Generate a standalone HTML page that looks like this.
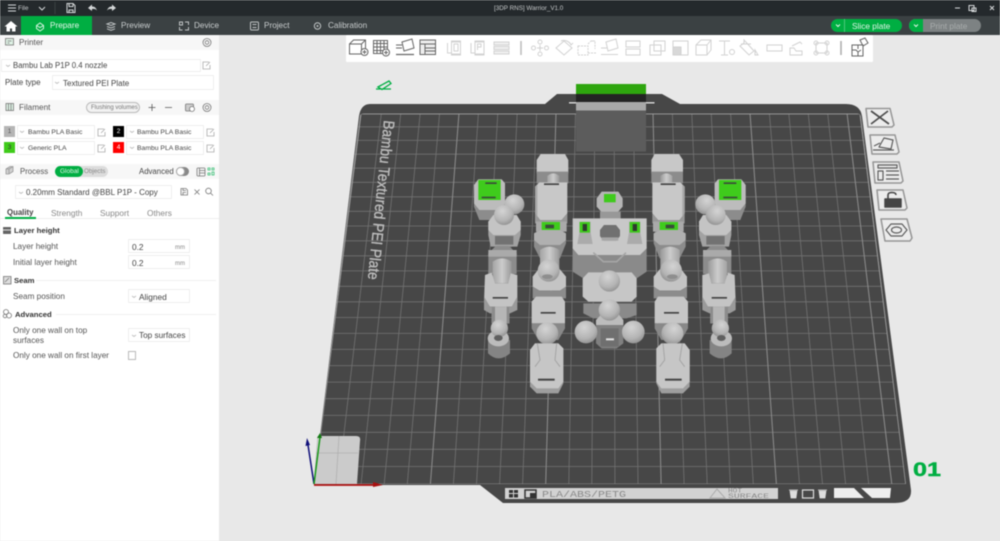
<!DOCTYPE html>
<html><head><meta charset="utf-8"><title>[3DP RNS] Warrior_V1.0</title>
<style>
html,body{margin:0;padding:0;background:#e8e8e8}
#w{position:relative;width:1000px;height:541px;overflow:hidden;background:#e8e8e8;font-family:"Liberation Sans",sans-serif;font-size:8px;color:#444;filter:blur(.4px)}
#w div,#w span.t{position:absolute;box-sizing:border-box;white-space:nowrap}
#w span.t{margin-top:1px}
.t{line-height:12px}
.box{background:#fff;border:1px solid #eee;border-radius:1px}
.h{font-weight:bold;color:#333;font-size:7.700px}
.l{color:#555;font-size:8.200px}
.tab{color:#c9cdce;font-size:8.200px}
svg.i{position:absolute;overflow:visible}
</style></head><body><div id="w">

<!-- top bars -->
<div style="left:0;top:0;width:1000px;height:16px;background:#24292c"></div>
<div style="left:0;top:16px;width:1000px;height:19px;background:#3b4143"></div>
<div style="left:21px;top:16px;width:71px;height:19px;background:#00ae42"></div>
<span class="t" style="left:18px;top:2px;font-size:6.500px;color:#c5c8c9">File</span>
<span class="t" style="left:494px;top:2px;font-size:6.300px;color:#c5c8c9">[3DP RNS] Warrior_V1.0</span>
<span class="t" style="left:50px;top:19px;color:#e6f7ec;font-size:8.200px">Prepare</span>
<span class="t tab" style="left:121px;top:19px">Preview</span>
<span class="t tab" style="left:194px;top:19px">Device</span>
<span class="t tab" style="left:264px;top:19px">Project</span>
<span class="t tab" style="left:328px;top:19px">Calibration</span>

<svg class="i" style="left:0;top:0" width="1000" height="35" fill="none" stroke="#d5d8d9" stroke-width="1">
 <path d="M8 5h8M8 8h8M8 11h8"/><path d="M39 7l3 3 3-3"/><path d="M55 2v12" stroke="#3b4143"/>
 <path d="M67 3.500h6l2 2v7h-8zM69 3.500v3h4v-3M69 13v-3h4v3"/>
 <path d="M88 8l4-3.500v2c3 0 4 1.500 5 4-1-1.500-3-2-5-1.500v2z" fill="#d5d8d9" stroke="none"/>
 <path d="M116 8l-4-3.500v2c-3 0-4 1.500-5 4 1-1.500 3-2 5-1.500v2z" fill="#d5d8d9" stroke="none"/>
 <path d="M955 8h5"/><path d="M969 5.500h5v5h-5zM972 8h4v3.500h-4z"/><path d="M990 6l4 4M994 6l-4 4"/>
 <path d="M11 21l-6.500 5.500h2v5h3.500v-3h2v3h3.500v-5h2z" fill="#fff" stroke="none"/>
 <path d="M36.500 25.500l3.500-2.500 3.500 2.500v3l-3.500 2.500-3.500-2.500zM36.500 25.500l3.500 2 3.500-2" stroke="#d5f3e0"/>
 <path d="M107 24l4-1.500 4 1.500-4 1.500zM107 26.500l4 1.500 4-1.500M107 28.800l4 1.500 4-1.500" stroke="#c0c4c5"/>
 <path d="M179.500 22h3v3h-3zM185 30h3.500v-3M185 22h3.500v3M179.500 27v3h3" stroke="#c0c4c5"/>
 <rect x="250.500" y="22" width="8" height="8" rx="1" stroke="#c0c4c5"/><path d="M252.500 24.500h4M252.500 27.500h4" stroke="#c0c4c5"/>
 <circle cx="317.500" cy="26" r="3.200" stroke="#c0c4c5"/><circle cx="317.500" cy="26" r="1" fill="#c0c4c5" stroke="none"/>
</svg>

<!-- Slice / print -->
<div style="left:831px;top:19px;width:71px;height:13px;border-radius:7px;background:#00ae42"></div>
<div style="left:844px;top:19px;width:1px;height:13px;background:#4cc87a"></div>
<span class="t" style="left:852px;top:19px;color:#dff5e7;font-size:8.300px">Slice plate</span>
<div style="left:909px;top:19px;width:72px;height:13px;border-radius:7px;background:#7d8283"></div>
<div style="left:909px;top:19px;width:14px;height:13px;border-radius:7px 0 0 7px;background:#00ae42"></div>
<span class="t" style="left:930px;top:19px;color:#a9adad;font-size:8.300px">Print plate</span>
<svg class="i" style="left:0;top:0" width="1000" height="35" fill="none" stroke="#dff5e7"><path d="M836 24.500l2 2 2-2M914 24.500l2 2 2-2"/></svg>

<!-- left panel -->
<div style="left:0;top:35px;width:219px;height:506px;background:#fff"></div>
<div style="left:0;top:35px;width:219px;height:15px;background:#f7f7f7"></div>
<div style="left:0;top:100px;width:219px;height:15px;background:#f7f7f7"></div>
<div style="left:0;top:164px;width:219px;height:15px;background:#f7f7f7"></div>

<span class="t l" style="left:19px;top:36px">Printer</span>
<div class="box" style="left:1px;top:59px;width:200px;height:13px"></div>
<span class="t" style="left:13px;top:59px;font-size:7.800px">Bambu Lab P1P 0.4 nozzle</span>
<span class="t" style="left:5px;top:76px">Plate type</span>
<div class="box" style="left:52px;top:75px;width:162px;height:15px"></div>
<span class="t" style="left:63px;top:77px">Textured PEI Plate</span>
<span class="t l" style="left:19px;top:101px">Filament</span>
<div style="left:86px;top:102px;width:54px;height:11px;border:1px solid #bbb;border-radius:6px;background:#f2f2f2"></div>
<span class="t" style="left:91px;top:101px;font-size:6px;color:#777">Flushing volumes</span>

<!-- filament rows -->
<div style="left:4px;top:126px;width:11px;height:11px;background:#b5b5b5;color:#555;font-size:6.500px;line-height:11px;text-align:center">1</div>
<div class="box" style="left:17px;top:125px;width:78px;height:14px"></div>
<span class="t" style="left:28px;top:126px;font-size:6.800px">Bambu PLA Basic</span>
<div style="left:113px;top:126px;width:11px;height:11px;background:#000;color:#fff;font-size:6.500px;line-height:11px;text-align:center">2</div>
<div class="box" style="left:126px;top:125px;width:78px;height:14px"></div>
<span class="t" style="left:137px;top:126px;font-size:6.800px">Bambu PLA Basic</span>
<div style="left:4px;top:142px;width:11px;height:11px;background:#3fcb1a;color:#333;font-size:6.500px;line-height:11px;text-align:center">3</div>
<div class="box" style="left:17px;top:141px;width:78px;height:14px"></div>
<span class="t" style="left:28px;top:142px;font-size:6.800px">Generic PLA</span>
<div style="left:113px;top:142px;width:11px;height:11px;background:#f00;color:#fff;font-size:6.500px;line-height:11px;text-align:center">4</div>
<div class="box" style="left:126px;top:141px;width:78px;height:14px"></div>
<span class="t" style="left:137px;top:142px;font-size:6.800px">Bambu PLA Basic</span>

<!-- process -->
<span class="t" style="left:20px;top:165px;font-size:7.800px;color:#555">Process</span>
<div style="left:55px;top:166px;width:53px;height:11px;border-radius:6px;background:#dcdcdc"></div>
<div style="left:55px;top:166px;width:28px;height:11px;border-radius:6px;background:#00ae42"></div>
<span class="t" style="left:60px;top:165px;font-size:6.500px;color:#dff5e7">Global</span>
<span class="t" style="left:84px;top:165px;font-size:6.300px;color:#888">Objects</span>
<span class="t" style="left:139px;top:165px;font-size:7.800px">Advanced</span>
<div style="left:176px;top:167px;width:13px;height:9px;border-radius:5px;background:#888"></div>
<div style="left:176px;top:167px;width:9px;height:9px;border-radius:5px;background:#fff;border:1px solid #aaa"></div>
<div class="box" style="left:15px;top:185px;width:157px;height:14px"></div>
<span class="t" style="left:26px;top:186px;font-size:8px">0.20mm Standard @BBL P1P - Copy</span>

<!-- tabs -->
<div style="left:0;top:218px;width:219px;height:1px;background:#eee"></div>
<div style="left:5px;top:217px;width:31px;height:1.500px;background:#00ae42"></div>
<span class="t" style="left:7px;top:206px;font-weight:bold;color:#444;font-size:7.800px">Quality</span>
<span class="t" style="left:51px;top:206px;color:#888;font-size:8.300px">Strength</span>
<span class="t" style="left:100px;top:206px;color:#888;font-size:8.300px">Support</span>
<span class="t" style="left:147px;top:206px;color:#888;font-size:8.300px">Others</span>

<span class="t h" style="left:14px;top:224px">Layer height</span>
<span class="t l" style="left:13px;top:240px">Layer height</span>
<div class="box" style="left:128px;top:239px;width:62px;height:14px"></div>
<span class="t" style="left:132px;top:240px;font-size:8.300px">0.2</span><span class="t" style="left:175px;top:241px;font-size:6px;color:#888">mm</span>
<span class="t l" style="left:13px;top:256px">Initial layer height</span>
<div class="box" style="left:128px;top:255px;width:62px;height:14px"></div>
<span class="t" style="left:132px;top:256px;font-size:8.300px">0.2</span><span class="t" style="left:175px;top:257px;font-size:6px;color:#888">mm</span>

<span class="t h" style="left:14px;top:274px">Seam</span>
<div style="left:36px;top:280px;width:180px;height:1px;background:#f0f0f0"></div>
<span class="t l" style="left:13px;top:290px">Seam position</span>
<div class="box" style="left:128px;top:289px;width:62px;height:14px"></div>
<span class="t" style="left:139px;top:290px;font-size:8.300px">Aligned</span>

<span class="t h" style="left:15px;top:308px">Advanced</span>
<div style="left:56px;top:314px;width:160px;height:1px;background:#f0f0f0"></div>
<span class="t l" style="left:13px;top:325px;line-height:10px">Only one wall on top<br>surfaces</span>
<div class="box" style="left:128px;top:328px;width:62px;height:14px"></div>
<span class="t" style="left:139px;top:329px;font-size:8.200px">Top surfaces</span>
<span class="t l" style="left:13px;top:349px">Only one wall on first layer</span>
<div style="left:128px;top:351px;width:8px;height:9px;border:1px solid #bbb;background:#fff"></div>

<!-- panel icons -->
<svg class="i" style="left:0;top:0" width="219" height="370" fill="none" stroke="#777" stroke-width=".8">
 <rect x="5.500" y="38.500" width="8" height="6.500" fill="#dff3e6"/><path d="M7.500 41h4M7.500 43h2"/>
 <circle cx="207" cy="42.500" r="4" /><circle cx="207" cy="42.500" r="1.800"/>
 <path d="M209 62h-6v7h7v-4M206 66l4-4" stroke="#aaa"/>
 <rect x="6" y="103.500" width="7.500" height="7" fill="#dff3e6"/><path d="M8.500 103.500v7M11 103.500v7"/>
 <path d="M152 104v7M148.500 107.500h7M165 107.500h7" stroke="#555"/>
 <rect x="185.500" y="104" width="8" height="7" rx="1" fill="#ccc"/><circle cx="192" cy="109" r="2.500" fill="#fff"/>
 <circle cx="207" cy="107.500" r="4"/><circle cx="207" cy="107.500" r="1.800"/>
 <path d="M104 129h-6v7h7v-4M101 133l4-4M104 145h-6v7h7v-4M101 149l4-4M213 129h-6v7h7v-4M210 133l4-4M213 145h-6v7h7v-4M210 149l4-4" stroke="#aaa"/>
 <path d="M6 169l4-2.500h3v5l-4 2.500h-3zM6 169h3v5M9 169l4-2.500" fill="#d0d0d0" stroke="#999"/>
 <rect x="197" y="168" width="8" height="8" rx="1"/><path d="M199.500 168v8M199.500 170.500h5.500M199.500 173h5.500"/>
 <path d="M208 168h2v2h-2zM212 168h2v2h-2zM208 173h2v2h-2zM212 172h2v3h-2z" stroke="#3bbf75"/>
 <path d="M181 188.500h5l1.500 1.500v5h-6.500zM183 188.500v2h3M183 195v-2.500h3" />
 <path d="M194.500 189.500l5 5M199.500 189.500l-5 5"/>
 <circle cx="208.500" cy="191" r="2.800"/><path d="M210.500 193l2.500 2.500"/>
 <rect x="3.500" y="227.500" width="7" height="6" fill="#666" stroke="#555"/><path d="M3 230h8" stroke="#fff"/>
 <rect x="3.500" y="276.500" width="7.500" height="7.500" fill="#ddd"/><path d="M5 282l4-4"/>
 <circle cx="6" cy="312" r="2.500"/><circle cx="9" cy="315.500" r="2.500"/><circle cx="5" cy="316" r="1.800"/>
</svg>
<svg class="i" style="left:0;top:0" width="219" height="345" fill="none" stroke="#bbb" stroke-width=".8">
 <path d="M6 65l2 1.500 2-1.500M55 82l2 1.500 2-1.500M20 131l2 1.500 2-1.500M20 147l2 1.500 2-1.500M130 131l2 1.500 2-1.500M130 147l2 1.500 2-1.500M19 192l2 1.500 2-1.500M132 296l2 1.500 2-1.500M132 335l2 1.500 2-1.500"/>
</svg>

<!-- toolbar -->
<div style="left:346px;top:35px;width:527px;height:27px;background:#fff;border-radius:1px"></div>
<svg class="i" style="left:0;top:0" width="1000" height="100" fill="none" stroke="#666" stroke-width="1">
 <path d="M349.500 44h12v10h-12zM349.500 44l4-4h12v10l-4 4M361.500 44l4-4"/><circle cx="364.500" cy="52" r="3.500" fill="#fff"/><path d="M362.500 52h4M364.500 50v4"/>
 <path d="M373.500 40.500h14v13h-14zM373.500 43.500h14M373.500 47h14M373.500 50.500h14M377 40.500v13M380.500 40.500v13M384 40.500v13"/><circle cx="386" cy="52.500" r="3.500" fill="#fff"/><path d="M384 52.500h4M386 50.500v4"/>
 <path d="M402 42l10-3 2 9-10 3zM396 45h6M396 48h6" /><path d="M396 54.500h18" stroke-width="1.300"/>
 <rect x="420" y="40" width="15.500" height="14.500" fill="#eee"/><path d="M420 44h15.500M425 44v10.500M425 48h10.500M425 51h10.500"/>
 <g stroke="#d2d2d2">
 <path d="M447.500 43v10h4v2h9v-13h-9"/><path d="M451.500 41h9v13h-9z"/><rect x="454" y="44" width="4" height="7"/>
 <path d="M471 43v10h4v2h9v-13h-9"/><path d="M475 41h9v13h-9z"/><path d="M477.500 50v-6h3.500v3h-3.500"/>
 <path d="M494 42h15v3h-15zM494 46.500h15v3h-15zM494 51h15v3h-15z" fill="#f0f0f0"/>
 <path d="M521 41v14" stroke="#bbb" stroke-width="1.500"/>
 <circle cx="540" cy="42" r="2"/><circle cx="540" cy="54" r="2"/><circle cx="533.500" cy="48" r="2"/><circle cx="546.500" cy="48" r="2"/><path d="M537 48h6M540 45v6"/>
 <path d="M556 48l8-7 8 7-8 7zM561 41c4-2 9 1 10 4l2-2"/>
 <path d="M578 46h10v9h-10zM588 44l3-3h4v8M591 41h4M588 53h8" stroke-dasharray="2 1"/>
 <path d="M606 42l10-3 2 9-10 3zM601 48h6M601 54.500h17"/>
 <path d="M626 41h14v6h-14zM626 49h14v6h-14z"/>
 <path d="M650 45h11v10h-11zM654 41h11v10h-11z"/>
 <path d="M673 41h15v14h-15z"/><path d="M673 47h8v8h-8z" fill="#d8d8d8"/>
 <path d="M696 45h11v10h-11zM696 45l5-5h10v10l-4 5M707 45l4-5"/>
 <path d="M719 41h11M724.500 41v14M721 55h7"/><circle cx="732" cy="52" r="2.500"/>
 <path d="M744 40l10 11-5 4-9-9 4-3zM741 44h10M755 50l3 5h-3z"/>
 <rect x="767" y="45" width="15" height="6"/>
 <path d="M790 55v-7h4l2 3h6v4zM792 46l8-4 2 2"/>
 <path d="M816 43h11v10h-11z"/><circle cx="816" cy="43" r="2"/><circle cx="827" cy="43" r="2"/><circle cx="816" cy="53" r="2"/><circle cx="827" cy="53" r="2"/>
 </g>
 <path d="M841 41v14" stroke="#aaa" stroke-width="1.500"/>
 <path d="M852 45h11v11h-11zM852 50h4l2 2 3-2M858 45v4M858 52v4M860 40l5-2 3 5-5 3z" fill="#fff"/>
 <path d="M378 87l11-6 2 2.500-9 6zM376 89h15" stroke="#00ae42" stroke-width="1.300"/>
</svg>

<!-- build plate -->
<svg class="i" style="left:0;top:0" width="1000" height="541">
 <defs>
  <clipPath id="g"><path d="M364 113.500h493q3.500 0 4 3L906 484H314.500L359 118q.7-4.500 5-4.500z"/></clipPath>
  <radialGradient id="b" cx=".42" cy=".3" r=".75"><stop offset="0" stop-color="#d4d4d4"/><stop offset=".65" stop-color="#b4b4b4"/><stop offset="1" stop-color="#8e8e8e"/></radialGradient>
  <linearGradient id="c" x1="0" x2="1"><stop offset="0" stop-color="#a4a4a4"/><stop offset=".5" stop-color="#cccccc"/><stop offset="1" stop-color="#989898"/></linearGradient>
 </defs>
 <path d="M370 104H545L557 94H662L680 104H846Q860 104 862 116L911 490Q912 503 895 503H503L480 485H314L359 116Q361 104 370 104Z" fill="#474747"/>
 <g clip-path="url(#g)" fill="none" stroke="#737373" stroke-width=".8">
  <path d="M300 466.500H920M300 449.300H920M300 432.300H920M300 415.400H920M300 398.700H920M300 382.100H920M300 365.600H920M300 349.400H920M300 333.400H920M300 317.500H920M300 301.800H920M300 286.300H920M300 270.900H920M300 255.800H920M300 240.800H920M300 226H920M300 211.300H920M300 196.800H920M300 182.300H920M300 168.200H920M300 154.200H920M300 140.400H920M300 126.800H920"/>
  <path d="M381.400 113L338.100 484M400.800 113L361.100 484M420.200 113L384.200 484M439.600 113L407.300 484M478.400 113L453.400 484M497.800 113L476.500 484M517.200 113L499.600 484M536.600 113L522.600 484M575.400 113L568.800 484M594.800 113L591.800 484M614.200 113L614.900 484M633.600 113L638 484M672.400 113L684.100 484M691.800 113L707.200 484M711.200 113L730.300 484M730.600 113L753.300 484M769.400 113L799.500 484M788.800 113L822.500 484M808.200 113L845.600 484M827.600 113L868.700 484"/>
  <path d="M459 113L430.400 484M556 113L545.700 484M653 113L661.100 484M750 113L776.400 484M847 113L891.800 484" stroke="#8e8e8e" stroke-width="1"/>
  <path d="M300 113.800H920M300 484.200H920M361 113L314 485M860 113L906 485" stroke="#a0a0a0" stroke-width="1.200"/>
 </g>
 <path d="M319 436H356Q361 436 360 441L357 484H314.500Z" fill="#cbcbcb" stroke="none"/>
 <path d="M316 453H358M318 436L314 484M339 436L336 484" stroke="#b0b0b0" stroke-width=".8" fill="none"/>
 <path d="M569 102.800H654.500" stroke="#fff" stroke-width="1.200"/>
 <!-- purge tower -->
 <rect x="576" y="84" width="70" height="10" fill="#2ea50e"/>
 <rect x="576" y="94" width="70" height="8" fill="#232323"/>
 <rect x="576" y="102" width="70" height="8.500" fill="#a8a8a8"/>
 <rect x="576" y="110.500" width="70" height="41" fill="#5c5c5c"/>
 <text transform="translate(384,120) rotate(95.8)" font-family="Liberation Sans,sans-serif" font-size="15.500" fill="#bcbcbc" stroke="#bcbcbc" stroke-width=".35" textLength="160" lengthAdjust="spacingAndGlyphs">Bambu Textured PEI Plate</text>

 <!-- axes -->
 <path d="M314 484L308 445" stroke="#10107a" stroke-width="1.500"/><path d="M305.500 446L307 438L310 445Z" fill="#10107a"/>
 <path d="M314 484L320 437" stroke="#1a9a1a" stroke-width="1.500"/><path d="M317 438L320 433L322 438Z" fill="#127a12"/>
 <path d="M314 485H376" stroke="#b01010" stroke-width="1.800"/><path d="M373 482L383 485L373 487Z" fill="#a81010"/>

 <!-- bottom labels -->
 <rect x="505" y="488" width="273" height="11" fill="#d2d2d2"/>
 <path d="M509 490h4v3h-4zM514 490h4v3h-4zM509 494h4v3.500h-4zM514 494h4v3.500h-4z" fill="#333"/>
 <path d="M525 490h11v8h-11z" fill="none" stroke="#333" stroke-width="1.500"/><path d="M530 493h6v5h-6z" fill="#333"/>
 <text x="542" y="497" font-family="Liberation Mono,monospace" font-size="9" fill="#8a8a8a" textLength="84" lengthAdjust="spacingAndGlyphs">PLA/ABS/PETG</text>
 <path d="M710 498L717 489L725 498Z" fill="none" stroke="#aaa"/>
 <text x="728" y="492.500" font-family="Liberation Mono,monospace" font-size="6" fill="#8a8a8a" textLength="14" lengthAdjust="spacingAndGlyphs">HOT</text>
 <text x="728" y="498" font-family="Liberation Mono,monospace" font-size="6" fill="#8a8a8a" textLength="41" lengthAdjust="spacingAndGlyphs">SURFACE</text>
 <path d="M790 491h7l-1 7h-5zM789 490h9" fill="#dedede" stroke="#dedede" stroke-width=".7"/>
 <rect x="802.500" y="490" width="11" height="8" fill="none" stroke="#dedede" stroke-width="1.200"/>
 <path d="M819 491h7l-1 7h-5zM818 490h9" fill="#dedede" stroke="#dedede" stroke-width=".7"/>
 <path d="M834 488H854L864 498H834ZM861 488H891L890 498H872Z" fill="#eee"/>
 <text x="913" y="476" font-family="Liberation Sans,sans-serif" font-weight="bold" font-size="19" fill="#00ae42" textLength="28" lengthAdjust="spacingAndGlyphs" stroke="#00ae42" stroke-width=".4">01</text>

 <!-- right side icons -->
 <g fill="none" stroke="#959595" stroke-width="1.500" stroke-linejoin="round">
  <path d="M866 108.500H890L894 125L892 127H868Z" fill="#ececec"/>
  <path d="M871 111L889 124M888 111L871 124" stroke="#4d4d4d" stroke-width="1.700"/>
  <path d="M870 135H895L899 152L897 154H872Z" fill="#ececec"/>
  <path d="M879 147L884 138L893 140L891 149ZM873 150H894M874 146L880 143" stroke="#5d5d5d" stroke-width="1.200"/>
  <path d="M873 162H899L903 181L901 183H875Z" fill="#ececec"/>
  <path d="M878 165H897V168H878ZM878 171H883V180H878ZM886 171H899M886 175H899M886 179H899" stroke="#5d5d5d" stroke-width="1.200"/>
  <path d="M877 190H903L907 208L905 210H879Z" fill="#ececec"/>
  <path d="M885 199H901V207H885Z" fill="#444" stroke="#444"/><path d="M888 199V195Q888 192.500 892 192.500Q896 192.500 896 195" stroke="#444" stroke-width="1.600"/>
  <path d="M881 219H907L912 238L910 241H885Z" fill="#ececec"/>
  <path d="M886 230L891 224H902L907 230L902 236H891Z" stroke="#5d5d5d" stroke-width="1.200"/><ellipse cx="896.500" cy="230" rx="5" ry="3" stroke="#5d5d5d" stroke-width="1.200"/>
 </g>

 <!-- robot -->
 <g transform="translate(460,150) scale(.33333)">
  <g id="half">
   <!-- outer arm -->
   <path d="M42 170V105L55 88H125L135 100V170L120 210H58Z" fill="#8c8c8c"/>
   <path d="M42 160V105L55 88H125L135 100V160L120 180H58Z" fill="#bcbcbc"/>
   <rect x="55" y="90" width="67" height="60" fill="#3fcb1c"/>
   <rect x="76" y="97" width="34" height="5" fill="#3a4a3a"/><rect x="65" y="140" width="42" height="5" fill="#3a4a3a"/>
   <circle cx="163" cy="163" r="30" fill="url(#b)"/>
   <path d="M85 215L100 195H170L182 215V255L172 290H92L85 255Z" fill="#a2a2a2"/>
   <path d="M85 215L100 195H170L182 215V240L165 255H100L85 240Z" fill="#c4c4c4"/>
   <rect x="105" y="258" width="55" height="26" fill="#727272"/>
   <circle cx="132" cy="195" r="30" fill="url(#b)"/>
   <path d="M85 310L107 288H147L170 310V372H85Z" fill="#8c8c8c"/>
   <path d="M85 300H170V320H85Z" fill="#aaaaaa"/>
   <path d="M98 335Q125 315 155 335V400H98Z" fill="url(#c)"/>
   <path d="M75 375L95 368L105 400H145L152 370L172 375V455L155 470H90L72 455Z" fill="#c4c4c4"/>
   <path d="M72 440L90 470H155L172 440V480L150 490H90L72 480Z" fill="#9a9a9a"/>
   <rect x="98" y="441" width="46" height="5" fill="#444"/>
   <path d="M95 470H148V520H95Z" fill="#b6b6b6"/><path d="M95 470H105V520H95ZM140 470H148V520H140Z" fill="#8c8c8c"/>
   <path d="M84 570V610Q115 640 150 610V570Z" fill="#848484"/>
   <ellipse cx="115" cy="565" rx="32" ry="24" fill="#bcbcbc"/>
   <circle cx="118" cy="535" r="26" fill="url(#b)"/>
   <ellipse cx="115" cy="564" rx="13" ry="9" fill="#5f5f5f"/>
   <!-- inner leg -->
   <path d="M230 30L242 12H315L325 30V70H230Z" fill="#c8c8c8"/>
   <path d="M230 65H325V100H230Z" fill="#8c8c8c"/>
   <path d="M262 78Q280 62 298 78V100H262Z" fill="url(#c)"/>
   <path d="M225 110L238 97H322V190L305 210H240L225 190Z" fill="#c8c8c8"/>
   <path d="M225 190V110L232 103V205Z" fill="#a6a6a6"/>
   <path d="M225 190L240 210H305L322 190V220H225Z" fill="#989898"/>
   <rect x="252" y="100" width="45" height="5" fill="#444"/>
   <path d="M228 215H320V245H228Z" fill="#aaaaaa"/>
   <rect x="245" y="216" width="55" height="26" fill="#3fcb1c"/><rect x="256" y="224" width="26" height="11" fill="#3a4a3a"/>
   <path d="M222 250L240 240H300L318 250V280L300 325H240L222 290Z" fill="#8c8c8c"/>
   <path d="M222 250L240 240H300L318 250V270L300 285H240L222 270Z" fill="#b0b0b0"/>
   <path d="M240 300Q268 280 298 300V380H240Z" fill="url(#c)"/>
   <path d="M218 380L235 358H300L318 380V410L300 422H238L218 410Z" fill="#c4c4c4"/>
   <circle cx="266" cy="362" r="33" fill="url(#b)"/>
   <ellipse cx="262" cy="380" rx="16" ry="7" fill="#8e8e8e"/>
   <path d="M218 410L238 422H300L318 410V445H218Z" fill="#8c8c8c"/>
   <path d="M215 455L228 440H305L315 455V520H215Z" fill="#c6c6c6"/>
   <path d="M215 520H315V535L295 570H235L215 535Z" fill="#888888"/>
   <rect x="242" y="486" width="45" height="5" fill="#444"/>
   <circle cx="262" cy="550" r="33" fill="url(#b)"/>
   <path d="M210 600L225 580H295L310 595V700L295 730H230L210 710Z" fill="#9e9e9e"/>
   <path d="M210 600L225 580H295L310 595V695L295 715H230L210 695Z" fill="#c6c6c6"/>
   <path d="M232 580L240 630L225 650M290 580L285 630L300 650" fill="none" stroke="#a4a4a4" stroke-width="3"/>
   <rect x="234" y="686" width="50" height="6" fill="#444"/>
  </g>
  <use href="#half" transform="translate(899,0) scale(-1,1)"/>
  <!-- right shoulder green -->
  <rect x="777" y="90" width="62" height="60" fill="#3fcb1c"/>
  <rect x="791" y="97" width="38" height="5" fill="#3a4a3a"/><rect x="790" y="140" width="42" height="5" fill="#3a4a3a"/>
  <!-- head -->
  <path d="M410 145L425 125H475L488 145V170L470 190H428L410 170Z" fill="#b6b6b6"/>
  <rect x="432" y="132" width="35" height="25" fill="#3fcb1c"/>
  <path d="M420 185H482V208H420Z" fill="#989898"/>
  <!-- torso -->
  <path d="M338 290H560V365L530 385H370L338 365Z" fill="#8a8a8a"/>
  <path d="M338 205H560V295L540 315H355L338 295Z" fill="#c8c8c8"/>
  <path d="M400 308L430 335H470L498 308" fill="none" stroke="#a6a6a6" stroke-width="5"/>
  <path d="M358 215H392V248L398 282H352L358 248Z" fill="#ababab"/>
  <path d="M507 215H541V248L547 282H501L507 248Z" fill="#ababab"/>
  <rect x="359" y="216" width="31" height="32" fill="#3fcb1c"/><rect x="368" y="222" width="13" height="21" fill="#2e3a2e"/>
  <rect x="509" y="216" width="31" height="32" fill="#3fcb1c"/><rect x="518" y="222" width="13" height="21" fill="#2e3a2e"/>
  <path d="M420 240L432 225H468L480 240V258L470 272H430L420 258Z" fill="#707070"/>
  <path d="M425 262H475V272H425Z" fill="#a6a6a6"/>
  <!-- pelvis -->
  <path d="M370 460H530V495L500 505H400L370 490Z" fill="#8a8a8a"/>
  <path d="M368 385L385 367H515L530 385V440L515 455H385L368 440Z" fill="#c6c6c6"/>
  <circle cx="448" cy="393" r="32" fill="url(#b)"/>
  <path d="M408 510L425 505H475L490 510V580L470 595H425L408 580Z" fill="#808080"/>
  <path d="M408 510L425 492H475L490 510V525H408Z" fill="#bcbcbc"/>
  <path d="M422 535H476V590H422Z" fill="#6f6f6f"/>
  <circle cx="378" cy="546" r="34" fill="url(#b)"/>
  <circle cx="520" cy="546" r="34" fill="url(#b)"/>
  <circle cx="448" cy="480" r="32" fill="url(#b)"/>
  <rect x="438" y="565" width="24" height="6" fill="#e4e4e4"/>
 </g>
</svg>
</div></body></html>
